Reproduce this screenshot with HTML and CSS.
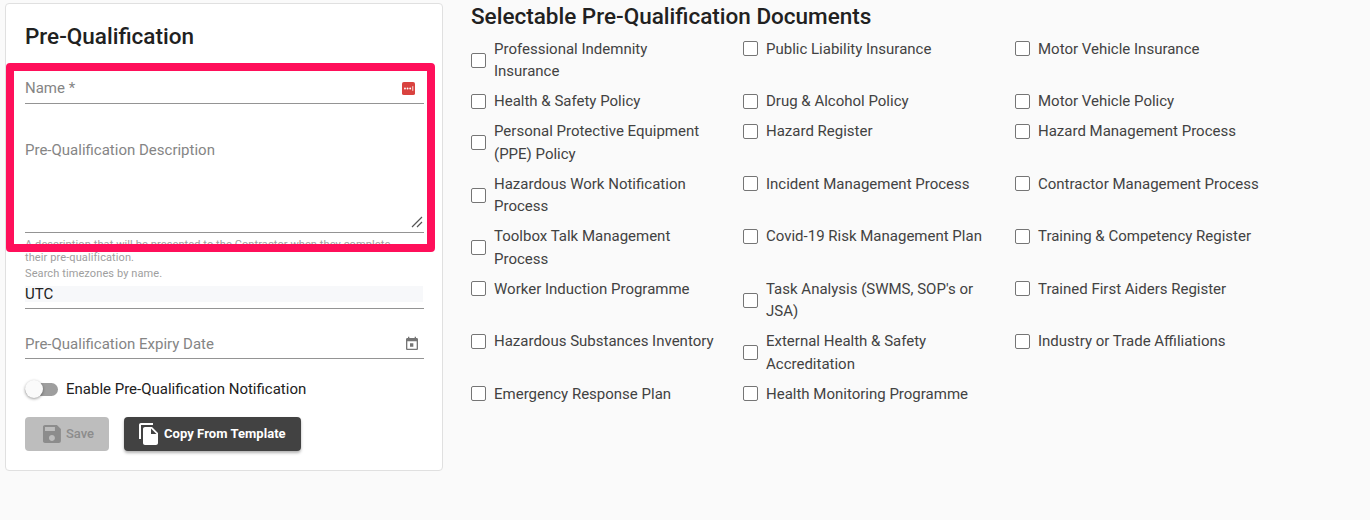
FILE: index.html
```html
<!doctype html>
<html>
	<head>
		<title>Pre-Qualification</title>
		<link rel="stylesheet" href="styles.css">
	</head>
	<body>
		<div class="page">
			<form class="card">
				<h2 class="cardTitle">Pre-Qualification</h2>

				<div class="field nameField">
					<span class="placeholder">Name *</span>
					<svg class="passIcon" viewBox="0 0 14 14" width="13" height="13">
						<rect width="14" height="14" rx="2" fill="#d9423f"></rect>
						<circle cx="3.2" cy="7" r="1" fill="#fff"></circle>
						<circle cx="6" cy="7" r="1" fill="#fff"></circle>
						<circle cx="8.8" cy="7" r="1" fill="#fff"></circle>
						<rect x="11.2" y="4.5" width="0.9" height="5" fill="#fff"></rect>
					</svg>
				</div>

				<div class="field descField">
					<span class="placeholder">Pre-Qualification Description</span>
					<svg class="resizer" viewBox="0 0 12 12" width="12" height="12">
						<path d="M1 11 L11 1 M6 11 L11 6" stroke="#555" stroke-width="1.2" fill="none"></path>
					</svg>
				</div>
				<p class="hint">A description that will be presented to the Contractor when they complete their pre-qualification.</p>
				<p class="hint tzHint">Search timezones by name.</p>

				<div class="field tzField">
					<span class="tzValue">UTC</span>
				</div>

				<div class="field dateField">
					<span class="placeholder">Pre-Qualification Expiry Date</span>
					<svg class="calIcon" viewBox="0 0 24 24" width="16" height="16">
						<path d="M19 3h-1V1h-2v2H8V1H6v2H5c-1.11 0-1.99.9-1.99 2L3 19c0 1.1.89 2 2 2h14c1.1 0 2-.9 2-2V5c0-1.1-.9-2-2-2zm0 16H5V8h14v11zM9 11h5v5H9z" fill="#757575"></path>
					</svg>
				</div>

				<div class="toggleRow">
					<span class="toggle"><span class="knob"></span></span>
					<span>Enable Pre-Qualification Notification</span>
				</div>

				<div class="actions">
					<button type="button" class="btn btnSave">
						<svg viewBox="0 0 24 24" width="24" height="24">
							<path d="M17 3H5c-1.11 0-2 .9-2 2v14c0 1.1.89 2 2 2h14c1.1 0 2-.9 2-2V7l-4-4zm-5 16c-1.66 0-3-1.34-3-3s1.34-3 3-3 3 1.34 3 3-1.34 3-3 3zm3-10H5V5h10v4z" fill="#8c8c8c"></path>
						</svg>
						Save
					</button>
					<button type="button" class="btn btnCopy">
						<svg viewBox="0 0 24 24" width="24" height="24">
							<path d="M16 1H4c-1.1 0-2 .9-2 2v14h2V3h12V1zm-1 4H8c-1.1 0-1.99.9-1.99 2L6 21c0 1.1.89 2 1.99 2H19c1.1 0 2-.9 2-2V11l-6-6zm-1 7V6.5l5.5 5.5H14z" fill="#fff"></path>
						</svg>
						Copy From Template
					</button>
				</div>

				<div class="highlight"></div>
			</form>

			<section class="docs">
				<h2 class="docsTitle">Selectable Pre-Qualification Documents</h2>
				<div class="docGrid">
					<label class="doc"><span class="box"></span><span class="docName">Professional Indemnity Insurance</span></label>
					<label class="doc"><span class="box"></span><span class="docName">Public Liability Insurance</span></label>
					<label class="doc"><span class="box"></span><span class="docName">Motor Vehicle Insurance</span></label>
					<label class="doc"><span class="box"></span><span class="docName">Health &amp; Safety Policy</span></label>
					<label class="doc"><span class="box"></span><span class="docName">Drug &amp; Alcohol Policy</span></label>
					<label class="doc"><span class="box"></span><span class="docName">Motor Vehicle Policy</span></label>
					<label class="doc"><span class="box"></span><span class="docName">Personal Protective Equipment (PPE) Policy</span></label>
					<label class="doc"><span class="box"></span><span class="docName">Hazard Register</span></label>
					<label class="doc"><span class="box"></span><span class="docName">Hazard Management Process</span></label>
					<label class="doc"><span class="box"></span><span class="docName">Hazardous Work Notification Process</span></label>
					<label class="doc"><span class="box"></span><span class="docName">Incident Management Process</span></label>
					<label class="doc"><span class="box"></span><span class="docName">Contractor Management Process</span></label>
					<label class="doc"><span class="box"></span><span class="docName">Toolbox Talk Management Process</span></label>
					<label class="doc"><span class="box"></span><span class="docName">Covid-19 Risk Management Plan</span></label>
					<label class="doc"><span class="box"></span><span class="docName">Training &amp; Competency Register</span></label>
					<label class="doc"><span class="box"></span><span class="docName">Worker Induction Programme</span></label>
					<label class="doc"><span class="box"></span><span class="docName">Task Analysis (SWMS, SOP's or JSA)</span></label>
					<label class="doc"><span class="box"></span><span class="docName">Trained First Aiders Register</span></label>
					<label class="doc"><span class="box"></span><span class="docName">Hazardous Substances Inventory</span></label>
					<label class="doc"><span class="box"></span><span class="docName">External Health &amp; Safety Accreditation</span></label>
					<label class="doc"><span class="box"></span><span class="docName">Industry or Trade Affiliations</span></label>
					<label class="doc"><span class="box"></span><span class="docName">Emergency Response Plan</span></label>
					<label class="doc"><span class="box"></span><span class="docName">Health Monitoring Programme</span></label>
				</div>
			</section>
		</div>
	</body>
</html>
```

FILE: styles.css
```css
html, body {
	margin: 0;
	padding: 0;
	height: 520px;
	overflow: hidden;
	background-color: #fafafa;
	font-family: Roboto, "Liberation Sans", sans-serif;
	color: #212121;
}

.page {
	display: flex;
	align-items: flex-start;
	padding: 3px 0 0 5px;
}

.card {
	position: relative;
	box-sizing: border-box;
	width: 438px;
	height: 468px;
	padding: 0 18px 0 19px;
	background-color: #fff;
	border: 1px solid #e0e0e0;
	border-radius: 4px;
	flex: none;
}

.cardTitle {
	margin: 17px 0 0;
	font-size: 22.5px;
	line-height: 30px;
	font-weight: 500;
}

.field {
	position: relative;
	display: flex;
	align-items: center;
	justify-content: space-between;
	border-bottom: 1px solid #949494;
	font-size: 15px;
}

.placeholder { color: #858585; }

.nameField {
	height: 29px;
	margin-top: 22px;
	padding-bottom: 1px;
}

.passIcon {
	margin-top: 1px;
	margin-right: 9px;
}

.descField {
	align-items: flex-start;
	height: 91px;
	margin-top: 27px;
	padding-top: 10px;
}

.resizer {
	position: absolute;
	right: 1px;
	bottom: 4px;
}

.hint {
	margin: 0;
	max-width: 380px;
	font-size: 11px;
	line-height: 13px;
	color: #9e9e9e;
	letter-spacing: 0.1px;
}

.descField + .hint { margin-top: 5px; }
.tzHint { margin-top: 3px; }

.tzField {
	display: block;
	height: 22px;
	margin-top: 6px;
}

.tzValue {
	display: block;
	height: 16px;
	margin-right: 1px;
	line-height: 16px;
	background-color: #f7f8fa;
}

.dateField {
	height: 28px;
	margin-top: 20px;
	padding-top: 1px;
}

.calIcon { margin-right: 4px; }

.toggleRow {
	display: flex;
	align-items: center;
	gap: 8px;
	margin-top: 21px;
	height: 18px;
	font-size: 15px;
}

.toggle {
	position: relative;
	display: block;
	width: 33px;
	height: 13px;
	border-radius: 7px;
	background-color: #9e9e9e;
}

.knob {
	position: absolute;
	left: 0;
	top: -3px;
	width: 18px;
	height: 18px;
	border-radius: 50%;
	background-color: #fafafa;
	box-shadow: 0 1px 3px rgba(0, 0, 0, 0.4);
}

.actions {
	display: flex;
	gap: 15px;
	margin-top: 19px;
}

.btn {
	display: flex;
	align-items: center;
	gap: 3px;
	box-sizing: border-box;
	height: 34px;
	padding: 0 15px 2px;
	border: 0 none;
	border-radius: 4px;
	font-family: inherit;
	font-size: 13px;
	font-weight: 500;
	cursor: pointer;
}

.btn svg { margin-top: 2px; }

.btnSave {
	width: 84px;
	gap: 2px;
	background-color: #bdbdbd;
	color: #8c8c8c;
}

.btnCopy {
	width: 177px;
	padding-left: 13px;
	padding-right: 0;
	background-color: #424242;
	color: #fff;
	font-weight: 700;
	letter-spacing: 0.05px;
	box-shadow: 0 2px 3px rgba(0, 0, 0, 0.3);
}

.highlight {
	position: absolute;
	left: 0;
	top: 59px;
	box-sizing: border-box;
	width: 429px;
	height: 189px;
	border: 8px solid #ff0f5a;
	border-radius: 4px;
}

.docs {
	margin-left: 28px;
	width: 816px;
}

.docsTitle {
	margin: 0;
	font-size: 22.5px;
	line-height: 27px;
	font-weight: 500;
}

.docGrid {
	display: grid;
	grid-template-columns: repeat(3, 272px);
	row-gap: 7.5px;
	align-items: start;
	margin-top: 7.5px;
}

.doc {
	display: flex;
	align-items: center;
	gap: 8px;
	font-size: 15px;
	line-height: 22.5px;
	color: #424242;
}

.box {
	box-sizing: border-box;
	width: 15px;
	height: 15px;
	flex: none;
	background-color: #fff;
	border: 1px solid #757575;
	border-radius: 2px;
}

.docName { width: 221px; }
```
